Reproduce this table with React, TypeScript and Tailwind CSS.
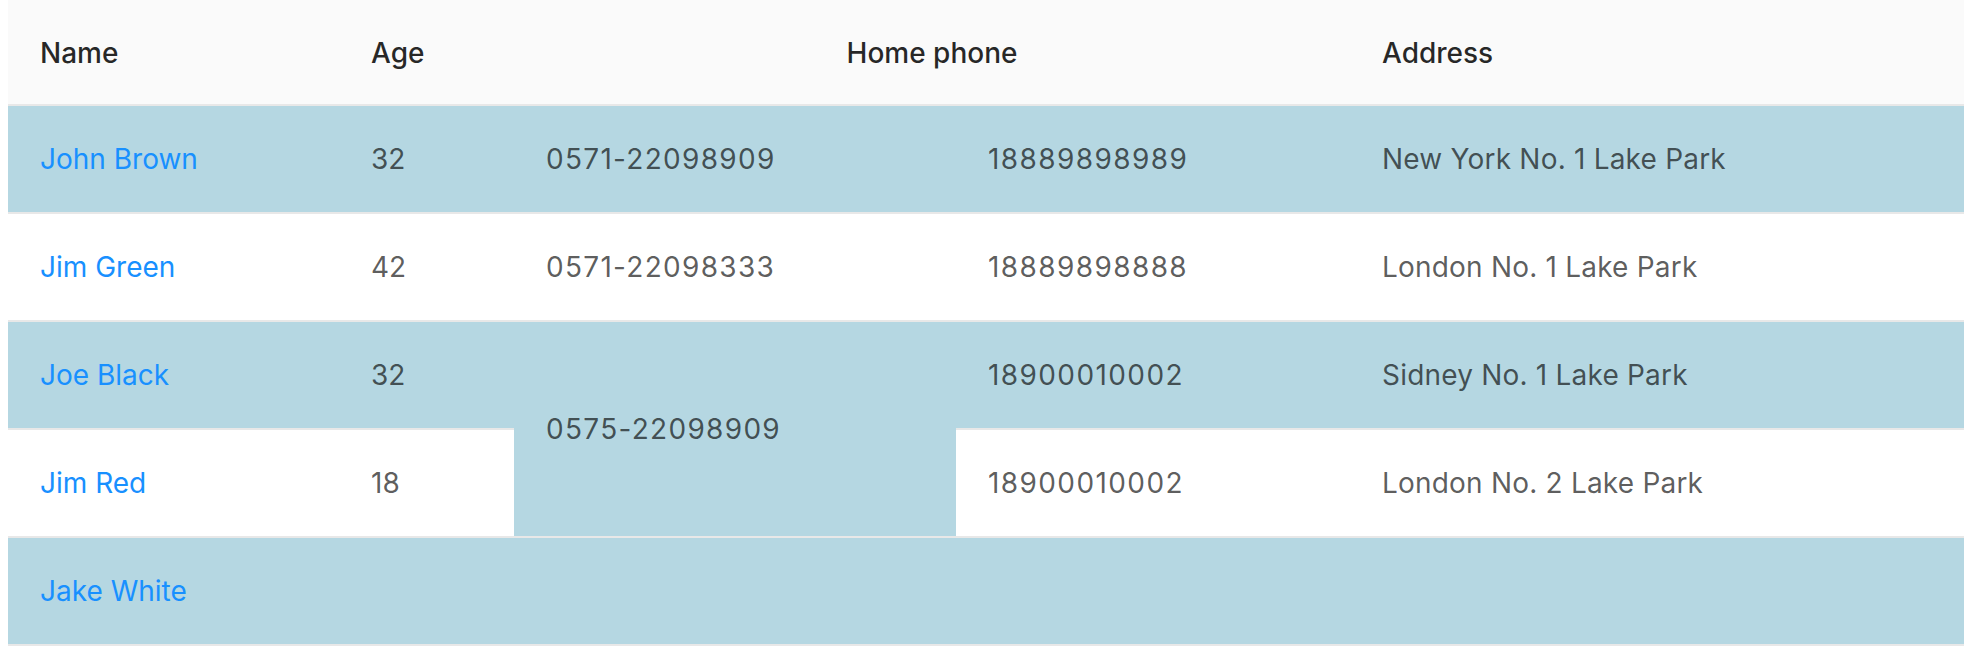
import React from "react";

const BLUE = "bg-[#b5d7e2]";

type Row = {
  name: string;
  age?: string;
  tel?: string;
  telSpan?: number;
  phone?: string;
  address?: string;
  full?: boolean;
  blue: boolean;
};

const rows: Row[] = [
  { name: "John Brown", age: "32", tel: "0571-22098909", phone: "18889898989", address: "New York No. 1 Lake Park", blue: true },
  { name: "Jim Green", age: "42", tel: "0571-22098333", phone: "18889898888", address: "London No. 1 Lake Park", blue: false },
  { name: "Joe Black", age: "32", tel: "0575-22098909", telSpan: 2, phone: "18900010002", address: "Sidney No. 1 Lake Park", blue: true },
  { name: "Jim Red", age: "18", telSpan: 0, phone: "18900010002", address: "London No. 2 Lake Park", blue: false },
  { name: "Jake White", full: true, blue: true },
];

const head = "px-[32px] pt-[32px] pb-[30px] leading-[42px] border-b-2 border-[#e8e8e8] text-left align-middle font-medium";
const cell = "px-[32px] py-[32px] leading-[42px] border-b-2 border-[#e8e8e8] text-left align-middle";

export default function App() {
  return (
    <div
      className="w-[1976px] h-[660px] bg-white pl-[8px]"
      style={{ fontFamily: "Inter, 'Noto Sans', sans-serif" }}
    >
      <table className="w-[1956px] table-fixed border-separate border-spacing-0 text-[28px]">
        <colgroup>
          <col className="w-[331px]" />
          <col className="w-[175px]" />
          <col className="w-[442px]" />
          <col className="w-[394px]" />
          <col className="w-[614px]" />
        </colgroup>
        <thead>
          <tr className="bg-[#fafafa] text-[rgba(0,0,0,0.85)]">
            <th className={head}>Name</th>
            <th className={head}>Age</th>
            <th colSpan={2} className={head + " !text-center"}>
              Home phone
            </th>
            <th className={head}>Address</th>
          </tr>
        </thead>
        <tbody className="text-[rgba(0,0,0,0.65)]">
          {rows.map((r) => {
            const bg = r.blue ? BLUE : "bg-white";
            if (r.full) {
              return (
                <tr key={r.name}>
                  <td colSpan={5} className={cell + " " + bg}>
                    <a className="text-[#1890ff]">{r.name}</a>
                  </td>
                </tr>
              );
            }
            return (
              <tr key={r.name}>
                <td className={cell + " " + bg}>
                  <a className="text-[#1890ff]">{r.name}</a>
                </td>
                <td className={cell + " " + bg}>{r.age}</td>
                {r.telSpan === 0 ? null : (
                  <td rowSpan={r.telSpan ?? 1} className={cell + " tracking-[1.3px] " + bg}>
                    {r.tel}
                  </td>
                )}
                <td className={cell + " tracking-[1.4px] " + bg}>{r.phone}</td>
                <td className={cell + " tracking-[0.2px] " + bg}>{r.address}</td>
              </tr>
            );
          })}
        </tbody>
      </table>
    </div>
  );
}
